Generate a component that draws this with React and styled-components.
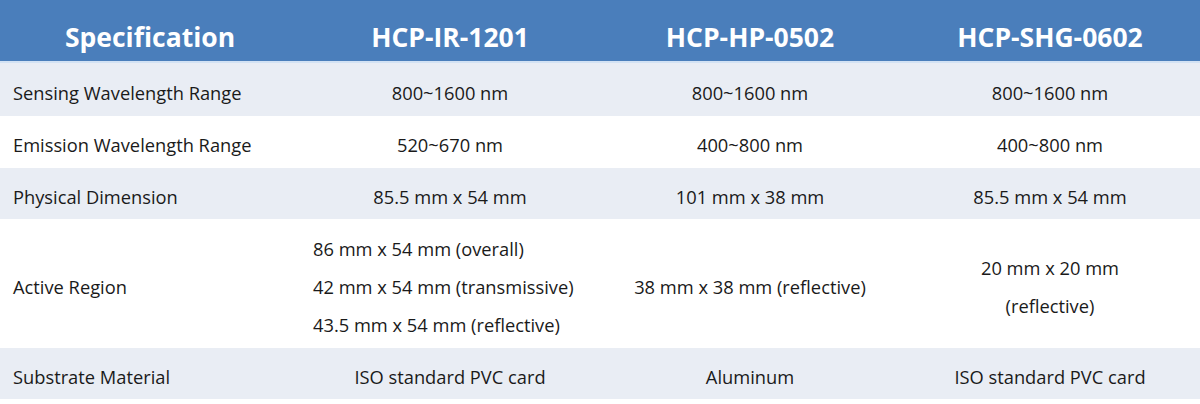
import styled, { createGlobalStyle } from "styled-components";

const Global = createGlobalStyle`
  body {
    margin: 0;
    background: #ffffff;
    font-family: "Open Sans", "Liberation Sans", sans-serif;
  }
`;

const Table = styled.div`
  width: 1200px;
  display: grid;
  grid-template-columns: repeat(4, 300px);
`;

const HeadCell = styled.div`
  height: 63px;
  box-sizing: border-box;
  padding-top: 12px;
  background: #4a7ebb;
  color: #ffffff;
  font-size: 26.5px;
  font-weight: 700;
  display: flex;
  align-items: center;
  justify-content: center;
  border-bottom: 2px solid #d3e2f3;
`;

const Cell = styled.div`
  background: ${(p) => (p.$shade ? "#e9edf4" : "#ffffff")};
  height: ${(p) => p.$h}px;
  box-sizing: border-box;
  color: #1a1a1a;
  font-size: 18.3px;
  display: flex;
  flex-direction: column;
  justify-content: center;
  align-items: ${(p) => (p.$left ? "flex-start" : "center")};
  padding: 6px 13px 0;
  line-height: 38px;
`;

const Block = styled.div`
  display: flex;
  flex-direction: column;
  align-self: ${(p) => (p.$left ? "flex-start" : "center")};
  align-items: ${(p) => (p.$left ? "flex-start" : "center")};
`;

const heads = ["Specification", "HCP-IR-1201", "HCP-HP-0502", "HCP-SHG-0602"];

const rows = [
  { h: 53, shade: true, cells: ["Sensing Wavelength Range", ["800~1600 nm"], ["800~1600 nm"], ["800~1600 nm"]] },
  { h: 52, shade: false, cells: ["Emission Wavelength Range", ["520~670 nm"], ["400~800 nm"], ["400~800 nm"]] },
  { h: 51, shade: true, cells: ["Physical Dimension", ["85.5 mm x 54 mm"], ["101 mm x 38 mm"], ["85.5 mm x 54 mm"]] },
  {
    h: 129,
    shade: false,
    cells: [
      "Active Region",
      ["86 mm x 54 mm (overall)", "42 mm x 54 mm (transmissive)", "43.5 mm x 54 mm (reflective)"],
      ["38 mm x 38 mm (reflective)"],
      ["20 mm x 20 mm", "(reflective)"],
    ],
  },
  { h: 51, shade: true, cells: ["Substrate Material", ["ISO standard PVC card"], ["Aluminum"], ["ISO standard PVC card"]] },
];

export default function App() {
  return (
    <>
      <Global />
      <Table>
        {heads.map((h) => (
          <HeadCell key={h}>{h}</HeadCell>
        ))}
        {rows.map((r, i) =>
          r.cells.map((c, j) => (
            <Cell key={`${i}-${j}`} $h={r.h} $shade={r.shade} $left={j === 0}>
              {j === 0 ? (
                c
              ) : (
                <Block $left={c.length > 2}>
                  {c.map((line) => (
                    <span key={line}>{line}</span>
                  ))}
                </Block>
              )}
            </Cell>
          ))
        )}
      </Table>
    </>
  );
}
